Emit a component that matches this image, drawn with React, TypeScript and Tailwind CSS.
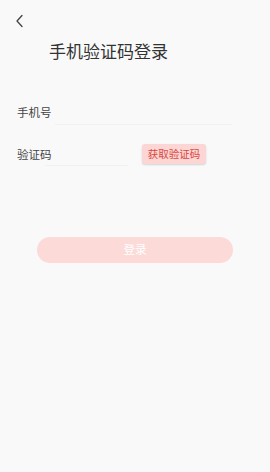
export default function App() {
  return (
    <div
      className="min-h-[472px] w-full bg-[#f9f9fa] text-[#333]"
      style={{ fontFamily: '"Noto Sans CJK SC", "Noto Sans", sans-serif' }}
    >
      <div className="pl-[15px] pt-[14px] h-[28px]">
        <svg width="10" height="14" viewBox="0 0 10 14" fill="none">
          <path d="M7 1.5 L2 7 L7 12.5" stroke="#444" strokeWidth="1.3" strokeLinecap="round" strokeLinejoin="round" />
        </svg>
      </div>
      <h1 className="mt-[11px] pl-[49px] text-[17px] leading-[24px] text-[#333] whitespace-nowrap">手机验证码登录</h1>

      <div className="mt-[38px] px-[17px]">
        <div className="flex items-end h-[24px]">
          <span className="shrink-0 whitespace-nowrap text-[11.5px] leading-[18px] pb-[4px] text-[#444] w-[38px]">手机号</span>
          <div className="flex-1 h-full border-b border-[#f1f1f1] mr-[21px]" />
        </div>
        <div className="mt-[17px] flex items-center h-[24px]">
          <span className="shrink-0 whitespace-nowrap text-[11.5px] leading-[18px] text-[#444] w-[28px]">验证码</span>
          <div className="w-[83px] h-full border-b border-[#f1f1f1]" />
          <button className="ml-[14px] shrink-0 whitespace-nowrap h-[20px] w-[64px] rounded-[3px] bg-[#fcd6d4] text-[#d9473f] text-[10.5px] leading-[20px] shadow-[0_1px_2px_rgba(0,0,0,0.15)]">
            获取验证码
          </button>
        </div>
      </div>

      <div className="mt-[69px] px-[37px]">
        <button className="w-[196px] h-[26px] rounded-full bg-[#fcdad8] text-white text-[11.5px]">登录</button>
      </div>
    </div>
  );
}
